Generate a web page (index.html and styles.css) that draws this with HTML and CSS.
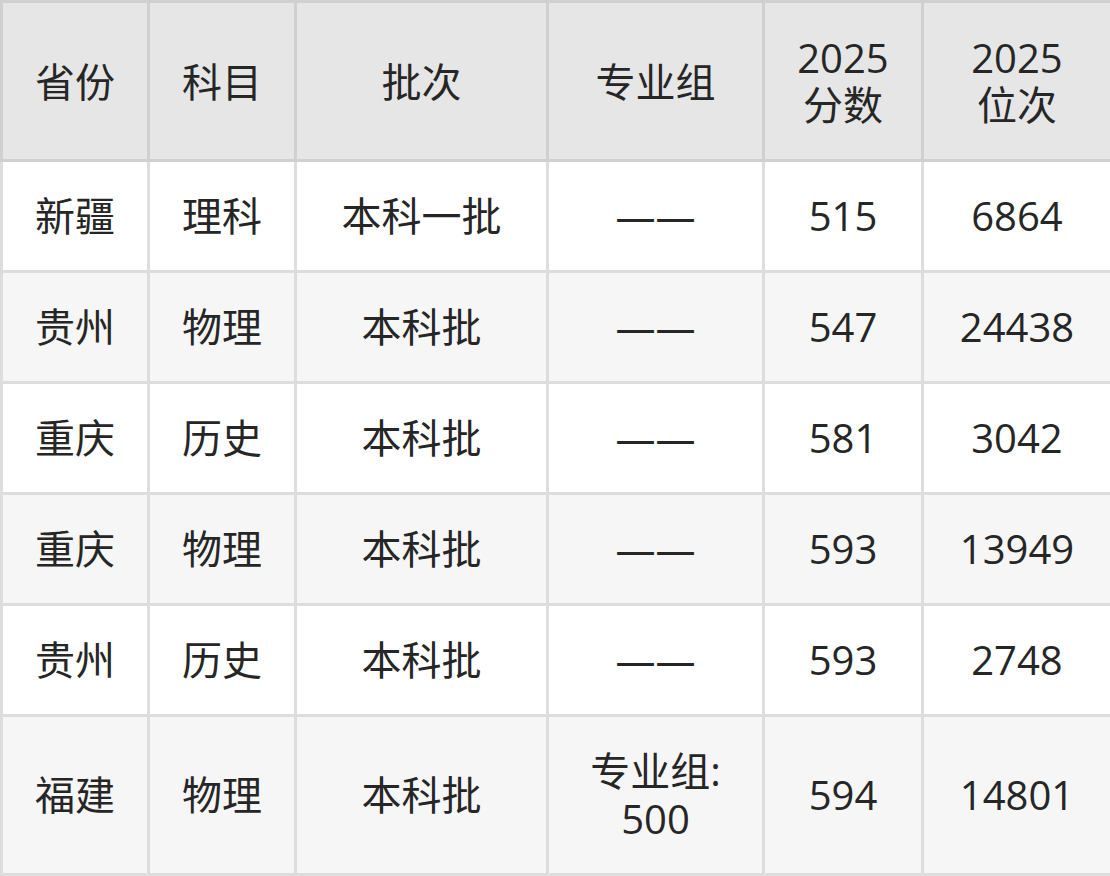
FILE: index.html
```html
<!DOCTYPE html>
<html lang="zh">
<head>
<meta charset="utf-8">
<link rel="stylesheet" href="styles.css">
</head>
<body>
<table class="grid">
  <colgroup>
    <col class="c1"><col class="c2"><col class="c3"><col class="c4"><col class="c5"><col class="c6">
  </colgroup>
  <thead>
    <tr class="head">
      <th>省份</th><th>科目</th><th>批次</th><th>专业组</th><th>2025<br>分数</th><th>2025<br>位次</th>
    </tr>
  </thead>
  <tbody>
    <tr class="row"><td>新疆</td><td>理科</td><td>本科一批</td><td>——</td><td>515</td><td>6864</td></tr>
    <tr class="row alt"><td>贵州</td><td>物理</td><td>本科批</td><td>——</td><td>547</td><td>24438</td></tr>
    <tr class="row"><td>重庆</td><td>历史</td><td>本科批</td><td>——</td><td>581</td><td>3042</td></tr>
    <tr class="row alt"><td>重庆</td><td>物理</td><td>本科批</td><td>——</td><td>593</td><td>13949</td></tr>
    <tr class="row"><td>贵州</td><td>历史</td><td>本科批</td><td>——</td><td>593</td><td>2748</td></tr>
    <tr class="row alt tall"><td>福建</td><td>物理</td><td>本科批</td><td>专业组:<br>500</td><td>594</td><td>14801</td></tr>
  </tbody>
</table>
</body>
</html>
```

FILE: styles.css
```css
html, body {
  margin: 0;
  padding: 0;
  background: #ffffff;
}
body {
  font-family: "Open Sans", "Noto Sans CJK SC", sans-serif;
  color: #262626;
}
.grid {
  border-collapse: collapse;
  table-layout: fixed;
  width: 1110px;
  font-size: 40px;
  line-height: 48px;
}
.c1 { width: 147px; }
.c2 { width: 147px; }
.c3 { width: 252px; }
.c4 { width: 216px; }
.c5 { width: 159px; }
.c6 { width: 189px; }
.grid th, .grid td {
  border: 3px solid #dddddd;
  text-align: center;
  vertical-align: middle;
  padding: 0;
  font-weight: 400;
}
.grid th {
  background: #e6e6e6;
  border-color: #d0d0d0;
  line-height: 47px;
}
.head { height: 159px; }
.row { height: 111px; }
.row.tall { height: 159px; }
.row td { background: #ffffff; }
.row.alt td { background: #f6f6f6; }
```
